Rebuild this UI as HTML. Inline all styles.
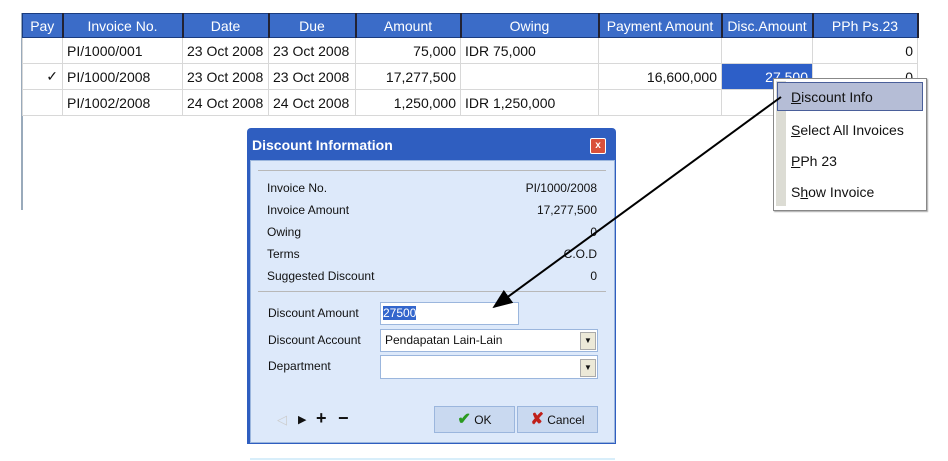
<!DOCTYPE html>
<html><head><style>
body{margin:0;width:948px;height:461px;background:#fff;position:relative;overflow:hidden;font-family:"Liberation Sans",sans-serif;font-size:14px;color:#111}
table{position:absolute;left:22px;top:13px;border-collapse:collapse;table-layout:fixed}
th{background:#3b6cc8;color:#fff;font-weight:normal;height:23px;border:1px solid #1a3c80;border-right:2px solid #223;padding:0;font-size:14px}
td{height:25px;border:1px solid #d8d8d8;padding:0 4px;white-space:nowrap;font-size:14px}
.r{text-align:right}
.a{position:absolute}
.lbl{position:absolute;left:267px;font-size:12px}
.val{position:absolute;font-size:12px;text-align:right}
</style></head><body>
<div class="a" style="left:21px;top:13px;width:2px;height:197px;background:#9ab"></div>
<table>
<colgroup><col width="40"><col width="120"><col width="86"><col width="87"><col width="105"><col width="138"><col width="123"><col width="91"><col width="105"></colgroup>
<tr><th>Pay</th><th>Invoice No.</th><th>Date</th><th>Due</th><th>Amount</th><th>Owing</th><th>Payment Amount</th><th>Disc.Amount</th><th>PPh Ps.23</th></tr>
<tr><td></td><td>PI/1000/001</td><td>23 Oct 2008</td><td>23 Oct 2008</td><td class="r">75,000</td><td>IDR 75,000</td><td></td><td></td><td class="r">0</td></tr>
<tr><td class="r">✓</td><td>PI/1000/2008</td><td>23 Oct 2008</td><td>23 Oct 2008</td><td class="r">17,277,500</td><td></td><td class="r">16,600,000</td><td class="r" style="background:#2d5fc8;color:#fff">27,500</td><td class="r">0</td></tr>
<tr><td></td><td>PI/1002/2008</td><td>24 Oct 2008</td><td>24 Oct 2008</td><td class="r">1,250,000</td><td>IDR 1,250,000</td><td></td><td></td><td></td></tr>
</table>

<div class="a" style="left:773px;top:78px;width:152px;height:131px;background:#fff;border:1px solid #888;box-shadow:1px 1px 1px #aaa">
<div class="a" style="left:2px;top:2px;width:10px;height:125px;background:#dcdcd4"></div>
<div class="a" style="left:3px;top:3px;width:144px;height:27px;background:#b5bdd6;border:1px solid #4a5f9a"></div>
<div class="a" style="left:17px;top:10px"><u>D</u>iscount Info</div>
<div class="a" style="left:17px;top:43px"><u>S</u>elect All Invoices</div>
<div class="a" style="left:17px;top:74px"><u>P</u>Ph 23</div>
<div class="a" style="left:17px;top:105px">S<u>h</u>ow Invoice</div>
</div>

<div class="a" style="left:247px;top:128px;width:369px;height:316px;background:#2f5ec0;border-radius:4px 4px 0 0"></div>
<div class="a" style="left:252px;top:137px;font-weight:bold;color:#fff;font-size:14px">Discount Information</div>
<div class="a" style="left:590px;top:138px;width:14px;height:14px;background:#d9503a;border:1px solid #fff;border-radius:2px;color:#fff;font-size:10px;text-align:center;line-height:14px;font-weight:bold">x</div>
<div class="a" style="left:250px;top:160px;width:363px;height:281px;background:#dde9fa;border:1px solid #9bb6dd"></div>
<div class="a" style="left:258px;top:170px;width:348px;height:1px;background:#b8b8b8"></div>
<div class="a" style="left:258px;top:291px;width:348px;height:1px;background:#b8b8b8"></div>
<div class="lbl" style="top:181px">Invoice No.</div><div class="val" style="left:400px;width:197px;top:181px">PI/1000/2008</div>
<div class="lbl" style="top:203px">Invoice Amount</div><div class="val" style="left:400px;width:197px;top:203px">17,277,500</div>
<div class="lbl" style="top:225px">Owing</div><div class="val" style="left:400px;width:197px;top:225px">0</div>
<div class="lbl" style="top:247px">Terms</div><div class="val" style="left:400px;width:197px;top:247px">C.O.D</div>
<div class="lbl" style="top:269px">Suggested Discount</div><div class="val" style="left:400px;width:197px;top:269px">0</div>
<div class="lbl" style="top:306px;left:268px">Discount Amount</div>
<div class="lbl" style="top:333px;left:268px">Discount Account</div>
<div class="lbl" style="top:359px;left:268px">Department</div>
<div class="a" style="left:380px;top:302px;width:137px;height:21px;background:#fff;border:1px solid #9bb6dd"><span style="position:absolute;left:2px;top:3px;font-size:12px;background:#3366cc;color:#fff">27500</span></div>
<div class="a" style="left:380px;top:329px;width:216px;height:21px;background:#fff;border:1px solid #9bb6dd"><span style="position:absolute;left:4px;top:3px;font-size:12px">Pendapatan Lain-Lain</span><span style="position:absolute;right:1px;top:2px;width:14px;height:16px;background:#ece9d8;border:1px solid #aaa;font-size:8px;text-align:center;line-height:16px">▼</span></div>
<div class="a" style="left:380px;top:355px;width:216px;height:22px;background:#fff;border:1px solid #9bb6dd"><span style="position:absolute;right:1px;top:3px;width:14px;height:16px;background:#ece9d8;border:1px solid #aaa;font-size:8px;text-align:center;line-height:16px">▼</span></div>
<div class="a" style="left:277px;top:412px;font-size:13px;color:#ccc">◁</div>
<div class="a" style="left:298px;top:413px;font-size:11px">▶</div>
<div class="a" style="left:316px;top:408px;font-size:18px;font-weight:bold">+</div>
<div class="a" style="left:338px;top:408px;font-size:18px;font-weight:bold">−</div>
<div class="a" style="left:434px;top:406px;width:79px;height:25px;background:#c9d9f0;border:1px solid #9bb6dd;font-size:12px;line-height:25px;text-align:center"><b style="color:#2a9a20;font-size:16px">✔</b> OK</div>
<div class="a" style="left:517px;top:406px;width:79px;height:25px;background:#c9d9f0;border:1px solid #9bb6dd;font-size:12px;line-height:25px;text-align:center"><b style="color:#c0201a;font-size:16px">✘</b> Cancel</div>
<div class="a" style="left:250px;top:458px;width:365px;height:2px;background:#d8eefa"></div>

<svg class="a" style="left:0;top:0" width="948" height="461">
<defs><marker id="m" markerWidth="10" markerHeight="8" refX="9" refY="4" orient="auto"><path d="M0,0L10,4L0,8z" fill="#000"/></marker></defs>
<line x1="781" y1="97" x2="494" y2="307" stroke="#000" stroke-width="2" marker-end="url(#m)"/>
</svg>
</body></html>
